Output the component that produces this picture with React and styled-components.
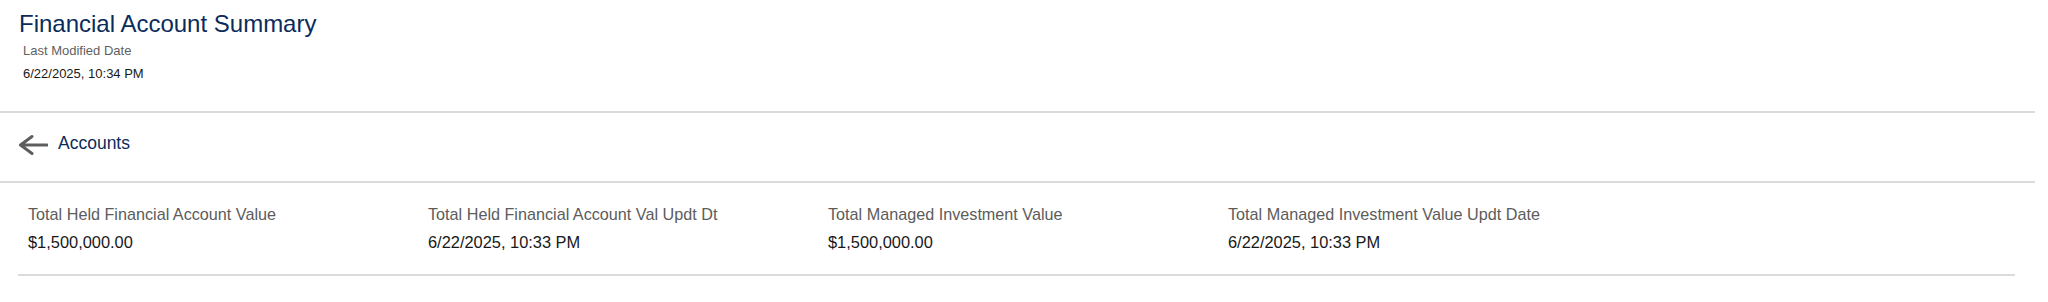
import React from "react";
import styled, { createGlobalStyle } from "styled-components";

const GlobalStyle = createGlobalStyle`
  html, body {
    margin: 0;
    padding: 0;
    background: #ffffff;
  }
  body {
    font-family: "Liberation Sans", Arial, sans-serif;
    color: #181818;
  }
`;

const Page = styled.div`
  width: 2035px;
  height: 302px;
  background: #ffffff;
`;

const Header = styled.header`
  display: flex;
  flex-direction: column;
  padding: 10px 0 28px 19px;
  border-bottom: 2px solid #dbdbdb;
`;

const Title = styled.h1`
  margin: 0;
  font-size: 24px;
  line-height: 28px;
  font-weight: 400;
  color: #0b2b5c;
`;

const MetaLabel = styled.div`
  margin: 3.5px 0 0 4px;
  font-size: 13px;
  line-height: 18px;
  color: #5f5f5f;
`;

const MetaValue = styled.div`
  margin: 5px 0 0 4px;
  font-size: 13px;
  line-height: 18px;
  color: #181818;
`;

const NavBar = styled.nav`
  display: flex;
  align-items: center;
  gap: 10px;
  height: 24px;
  padding: 18px 0 26px 18px;
  border-bottom: 2px solid #dbdbdb;
`;

const BackIcon = styled.svg`
  display: block;
  width: 30px;
  height: 22px;
  transform: translateY(2px);
  flex: none;
`;

const NavLink = styled.a`
  font-size: 17.5px;
  line-height: 24px;
  color: #0b2b5c;
  text-decoration: none;
`;

const Fields = styled.section`
  display: grid;
  grid-template-columns: repeat(4, 400px);
  margin: 0 20px 0 18px;
  padding: 21px 10px 22px;
  border-bottom: 2px solid #dbdbdb;
`;

const Field = styled.div`
  display: flex;
  flex-direction: column;
  gap: 8px;
`;

const FieldLabel = styled.div`
  font-size: 16.2px;
  line-height: 20px;
  color: #5c5c5c;
`;

const FieldValue = styled.div`
  font-size: 16.4px;
  line-height: 20px;
  color: #181818;
`;

const fields = [
  { label: "Total Held Financial Account Value", value: "$1,500,000.00" },
  { label: "Total Held Financial Account Val Updt Dt", value: "6/22/2025, 10:33 PM" },
  { label: "Total Managed Investment Value", value: "$1,500,000.00" },
  { label: "Total Managed Investment Value Updt Date", value: "6/22/2025, 10:33 PM" },
];

export default function App() {
  return (
    <>
      <GlobalStyle />
      <Page>
        <Header>
          <Title>Financial Account Summary</Title>
          <MetaLabel>Last Modified Date</MetaLabel>
          <MetaValue>6/22/2025, 10:34 PM</MetaValue>
        </Header>
        <NavBar>
          <BackIcon viewBox="0 0 30 22" aria-hidden="true">
            <path
              d="M2.5 11 H29 M14 2.5 L2.5 11 L14 19.5"
              fill="none"
              stroke="#5e5e5e"
              strokeWidth="3"
              strokeLinecap="round"
              strokeLinejoin="round"
            />
          </BackIcon>
          <NavLink href="#">Accounts</NavLink>
        </NavBar>
        <Fields>
          {fields.map((f) => (
            <Field key={f.label}>
              <FieldLabel>{f.label}</FieldLabel>
              <FieldValue>{f.value}</FieldValue>
            </Field>
          ))}
        </Fields>
      </Page>
    </>
  );
}
